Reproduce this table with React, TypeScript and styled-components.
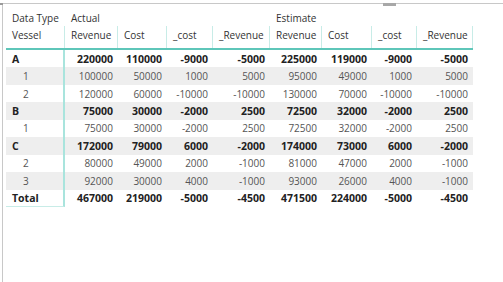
import styled, { createGlobalStyle } from 'styled-components'

const GlobalStyle = createGlobalStyle`
  html, body {
    margin: 0;
    padding: 0;
    background: #ffffff;
  }
  body {
    font-family: "Open Sans", "Noto Sans", sans-serif;
  }
`

const columns = '59px 53px 49px 46px 57px 52px 50px 45px 56px'

const Visual = styled.div`
  position: relative;
  margin: 3px 0 0 2px;
  height: calc(100vh - 3px);
  box-sizing: border-box;
  border-top: 1px solid #c8c8c8;
  border-left: 1px solid #c8c8c8;
  padding: 6px 0 0 3px;
`

const CornerMark = styled.div`
  position: absolute;
  top: -1px;
  left: -3px;
  width: 3px;
  height: 2px;
  background: #9a9a9a;
`

const GripHandle = styled.div`
  position: absolute;
  top: -1px;
  left: 380px;
  width: 13px;
  height: 3px;
  background: #a8a8a8;
`

const Grid = styled.div`
  display: flex;
  flex-direction: column;
  width: 467px;
  font-size: 10px;
`

const Row = styled.div<{ $striped?: boolean }>`
  display: grid;
  grid-template-columns: ${columns};
  height: 17.45px;
  background: ${(p) => (p.$striped ? '#eeeeee' : '#ffffff')};
`

const GroupRow = styled.div`
  display: grid;
  grid-template-columns: ${columns};
  height: 16px;
  line-height: 16px;
  color: #333333;
`

const LabelRow = styled.div`
  display: grid;
  grid-template-columns: ${columns};
  height: 22px;
  border-bottom: 2px solid #5ec6b9;
  color: #333333;
`

const GroupCell = styled.div<{ $col: number }>`
  grid-column: ${(p) => p.$col};
  padding: 0 6px;
  white-space: nowrap;
`

const LabelCell = styled.div`
  padding: 2px 6px 0;
  line-height: 14px;
  border-right: 1px solid #c8ece7;
  white-space: nowrap;
`

const VesselCell = styled.div<{ $bold?: boolean; $child?: boolean; $last?: boolean }>`
  display: flex;
  align-items: center;
  padding-left: ${(p) => (p.$child ? '17px' : '6px')};
  font-size: ${(p) => (p.$bold ? '10.5px' : '10px')};
  font-weight: ${(p) => (p.$bold ? 700 : 400)};
  color: ${(p) => (p.$bold ? '#222222' : '#555555')};
  border-right: 2px solid #a9e4dd;
  border-bottom: ${(p) => (p.$last ? '1px solid #c8ece7' : 'none')};
`

const NumCell = styled.div<{ $bold?: boolean }>`
  display: flex;
  align-items: center;
  justify-content: flex-end;
  padding-right: 5px;
  font-size: ${(p) => (p.$bold ? '10.5px' : '10px')};
  font-weight: ${(p) => (p.$bold ? 700 : 400)};
  color: ${(p) => (p.$bold ? '#222222' : '#555555')};
`

interface Line {
  vessel: string
  values: number[]
  bold?: boolean
  child?: boolean
}

const lines: Line[] = [
  { vessel: 'A', bold: true, values: [220000, 110000, -9000, -5000, 225000, 119000, -9000, -5000] },
  { vessel: '1', child: true, values: [100000, 50000, 1000, 5000, 95000, 49000, 1000, 5000] },
  { vessel: '2', child: true, values: [120000, 60000, -10000, -10000, 130000, 70000, -10000, -10000] },
  { vessel: 'B', bold: true, values: [75000, 30000, -2000, 2500, 72500, 32000, -2000, 2500] },
  { vessel: '1', child: true, values: [75000, 30000, -2000, 2500, 72500, 32000, -2000, 2500] },
  { vessel: 'C', bold: true, values: [172000, 79000, 6000, -2000, 174000, 73000, 6000, -2000] },
  { vessel: '2', child: true, values: [80000, 49000, 2000, -1000, 81000, 47000, 2000, -1000] },
  { vessel: '3', child: true, values: [92000, 30000, 4000, -1000, 93000, 26000, 4000, -1000] },
  { vessel: 'Total', bold: true, values: [467000, 219000, -5000, -4500, 471500, 224000, -5000, -4500] },
]

const labels = ['Vessel', 'Revenue', 'Cost', '_cost', '_Revenue', 'Revenue', 'Cost', '_cost', '_Revenue']

export default function App() {
  return (
    <>
      <GlobalStyle />
      <Visual>
        <CornerMark />
        <GripHandle />
        <Grid>
          <GroupRow>
            <GroupCell $col={1}>Data Type</GroupCell>
            <GroupCell $col={2}>Actual</GroupCell>
            <GroupCell $col={6}>Estimate</GroupCell>
          </GroupRow>
          <LabelRow>
            {labels.map((label, i) => (
              <LabelCell key={i}>{label}</LabelCell>
            ))}
          </LabelRow>
          {lines.map((line, i) => (
            <Row key={i} $striped={i % 2 === 1}>
              <VesselCell $bold={line.bold} $child={line.child} $last={i === lines.length - 1}>
                {line.vessel}
              </VesselCell>
              {line.values.map((v, j) => (
                <NumCell key={j} $bold={line.bold}>
                  {v}
                </NumCell>
              ))}
            </Row>
          ))}
        </Grid>
      </Visual>
    </>
  )
}
